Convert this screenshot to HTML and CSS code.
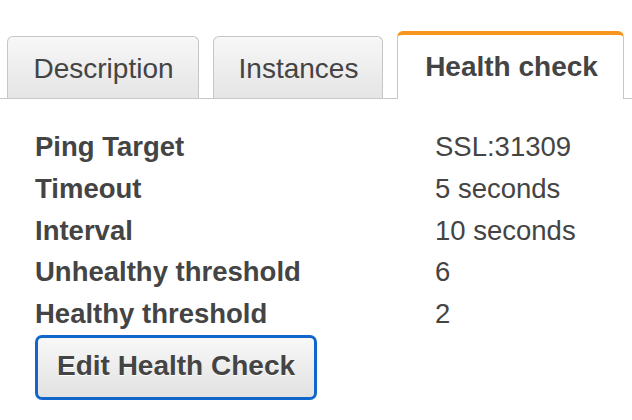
FILE: index.html
```html
<!DOCTYPE html>
<html>
<head>
<meta charset="utf-8">
<link rel="stylesheet" href="styles.css">
</head>
<body>
<div class="tabs">
  <div class="tab tab-desc">Description</div>
  <div class="tab tab-inst">Instances</div>
  <div class="tab tab-health active">Health check</div>
</div>
<div class="panel">
  <div class="details">
    <div class="label">Ping Target</div><div class="value">SSL:31309</div>
    <div class="label">Timeout</div><div class="value">5 seconds</div>
    <div class="label">Interval</div><div class="value">10 seconds</div>
    <div class="label">Unhealthy threshold</div><div class="value">6</div>
    <div class="label">Healthy threshold</div><div class="value">2</div>
  </div>
  <button class="btn">Edit Health Check</button>
</div>
</body>
</html>
```
FILE: styles.css
```css
html, body {
  margin: 0;
  padding: 0;
  background: #fff;
}
body {
  font-family: "Liberation Sans", Arial, sans-serif;
  color: #444;
  width: 632px;
  height: 420px;
  overflow: hidden;
}
.tabs {
  display: flex;
  align-items: flex-end;
  gap: 14px;
  padding-left: 7px;
  padding-top: 31px;
  border-bottom: 1px solid #c8c8c8;
  height: 67px;
  box-sizing: content-box;
}
.tab {
  box-sizing: border-box;
  height: 62px;
  padding: 2px 0 0 1px;
  display: flex;
  align-items: center;
  justify-content: center;
  font-size: 28px;
  color: #444;
  background: linear-gradient(#f7f7f7, #e5e5e5);
  border: 1px solid #c6c6c6;
  border-bottom: none;
  border-radius: 6px 6px 0 0;
}
.tab-desc { width: 192px; }
.tab-inst { width: 170px; }
.tab-health { width: 227px; }
.tab.active {
  height: 68px;
  margin-bottom: -1px;
  background: #fff;
  border-top: 4px solid #f7961e;
  font-weight: bold;
  padding: 0 0 0 2px;
  color: #444;
}
.panel {
  padding: 27px 0 0 35px;
}
.details {
  display: grid;
  grid-template-columns: 400px auto;
  font-size: 27.5px;
  line-height: 41.8px;
}
.label {
  font-weight: bold;
  color: #444;
}
.value {
  color: #444;
}
.btn {
  display: block;
  box-sizing: border-box;
  width: 282px;
  height: 65px;
  margin: 0;
  padding: 0 0 2px 0;
  font-family: "Liberation Sans", Arial, sans-serif;
  font-weight: bold;
  font-size: 28px;
  color: #444;
  text-shadow: 0 1px 0 #fff;
  background: linear-gradient(#f8f8f8, #e2e2e2);
  border: 3px solid #1166cc;
  border-radius: 7px;
}
```
